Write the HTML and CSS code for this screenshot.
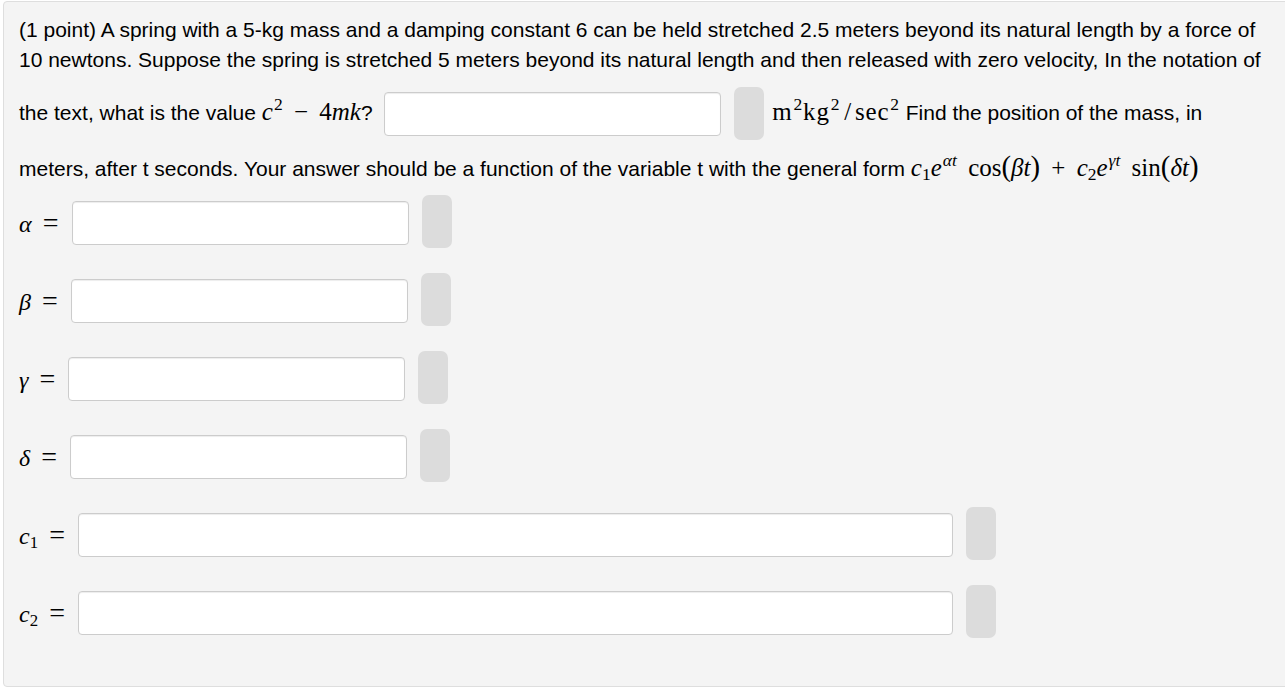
FILE: index.html
```html
<!DOCTYPE html>
<html>
<head>
<meta charset="utf-8">
<link rel="stylesheet" href="styles.css">
</head>
<body>
<div class="problem">
  <p class="statement">(1 point) A spring with a 5-kg mass and a damping constant 6 can be held stretched 2.5 meters beyond its natural length by a force of 10 newtons. Suppose the spring is stretched 5 meters beyond its natural length and then released with zero velocity, In the notation of the text, what is the value <span class="math"><i>c</i><sup>2</sup><span class="bin">−</span>4<i>mk</i></span>? <input class="answer" type="text"><span class="preview"></span> <span class="math unit">m<sup>2</sup>kg<sup>2</sup><span class="slash">/</span>sec<sup>2</sup></span> Find the position of the mass, in meters, after t seconds. Your answer should be a function of the variable t with the general form <span class="math formula"><i>c</i><sub>1</sub><i>e</i><sup><i>αt</i></sup> <span class="fn">cos</span><span class="paren">(</span><i>βt</i><span class="paren">)</span><span class="bin">+</span><i>c</i><sub>2</sub><i>e</i><sup><i>γt</i></sup> <span class="fn">sin</span><span class="paren">(</span><i>δt</i><span class="paren">)</span></span></p>

  <div class="answer-row">
    <span class="math label"><i>α</i><span class="rel">=</span></span>
    <input class="answer" type="text"><span class="preview"></span>
  </div>
  <div class="answer-row">
    <span class="math label"><i>β</i><span class="rel">=</span></span>
    <input class="answer" type="text"><span class="preview"></span>
  </div>
  <div class="answer-row">
    <span class="math label"><i>γ</i><span class="rel">=</span></span>
    <input class="answer" type="text"><span class="preview"></span>
  </div>
  <div class="answer-row">
    <span class="math label"><i>δ</i><span class="rel">=</span></span>
    <input class="answer" type="text"><span class="preview"></span>
  </div>
  <div class="answer-row">
    <span class="math label"><i>c</i><sub>1</sub><span class="rel">=</span></span>
    <input class="answer wide" type="text"><span class="preview"></span>
  </div>
  <div class="answer-row">
    <span class="math label"><i>c</i><sub>2</sub><span class="rel">=</span></span>
    <input class="answer wide" type="text"><span class="preview"></span>
  </div>
</div>
</body>
</html>
```

FILE: styles.css
```css
html, body {
  margin: 0;
  padding: 0;
  overflow: hidden;
  background: #ffffff;
}

.problem {
  margin: 1px -12px 0 3px;
  padding: 13px 30px 34px 15px;
  background: #f4f4f4;
  border: 1px solid #dedede;
  border-radius: 4px;
  font-family: "Liberation Sans", Arial, sans-serif;
  font-size: 21px;
  color: #000;
}

.statement {
  margin: 0;
  line-height: 30px;
}

.math {
  font-family: "Liberation Serif", "Times New Roman", serif;
  font-size: 25px;
  white-space: nowrap;
}

.math i {
  font-style: italic;
}

.math sup, .math sub {
  font-size: 0.7em;
  line-height: 0;
  vertical-align: 0;
  position: relative;
}

.math sup { top: -0.55em; margin-left: 1px; }
.math sub { top: 0.25em; }

.bin {
  margin: 0 0.45em;
}

.fn {
  margin-left: 0.2em;
}

.slash {
  margin: 0 3px 0 4px;
}

.paren {
  font-size: 1.15em;
  line-height: 0;
}

.unit {
  margin-left: 2px;
  letter-spacing: 0.8px;
}

.answer {
  box-sizing: border-box;
  width: 337px;
  height: 44px;
  margin: 0;
  padding: 4px 8px;
  background: #fff;
  border: 1px solid #cccccc;
  border-radius: 4px;
  box-shadow: inset 0 1px 1px rgba(0, 0, 0, 0.075);
  vertical-align: middle;
  font-size: 16px;
}

.statement .answer {
  margin-left: 6px;
}

.answer.wide {
  width: 875px;
}

.preview {
  display: inline-block;
  width: 30px;
  height: 53px;
  margin: 12px 0 13px 13px;
  background: #dcdcdc;
  border-radius: 7px;
  vertical-align: middle;
}

.answer-row {
  display: flex;
  align-items: center;
  height: 78px;
}

.answer-row .preview {
  margin: -3px 0 0 13px;
}

.label {
  display: inline-flex;
  align-items: baseline;
  margin-right: 12px;
  font-size: 24px;
}

.rel {
  display: inline-block;
  width: 18px;
  text-align: center;
  margin: 0 0 0 10px;
  font-style: normal;
  font-size: 28px;
  line-height: 1;
}
```
